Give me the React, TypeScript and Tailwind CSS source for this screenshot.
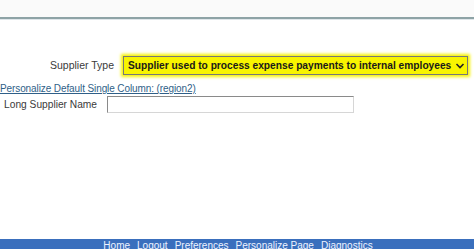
import React from 'react';

const footerLinks = ['Home', 'Logout', 'Preferences', 'Personalize Page', 'Diagnostics'];

const App: React.FC = () => {
  return (
    <div className="w-[474px] h-[249px] bg-white overflow-hidden flex flex-col font-['Liberation_Sans',Arial,sans-serif] text-[#3a3a3a]">
      {/* top rule */}
      <div className="h-[17px] bg-[#fafafa]" />
      <div className="h-[2px] bg-[#8ea3a6]" />
      <div className="h-px bg-[#dfe6ea]" />

      {/* supplier type */}
      <div className="mt-[36px] flex items-center h-[19px]">
        <span className="w-[114px] shrink-0 text-right text-[10.5px] whitespace-nowrap">Supplier Type</span>
        <div className="ml-[9px] w-[345px] shrink-0 h-[19px] bg-[#f8f400] border border-[#777] flex items-center justify-between pl-[4px] pr-[2px] shadow-[0_0_3px_2px_#f5f200]">
          <span className="text-[10.2px] font-bold text-[#1a1a1a] whitespace-nowrap">
            Supplier used to process expense payments to internal employees
          </span>
          <svg width="10" height="8" viewBox="0 0 10 8" className="shrink-0">
            <path d="M1.5 2 L5 5.5 L8.5 2" stroke="#222" strokeWidth="1.6" fill="none" />
          </svg>
        </div>
      </div>

      {/* personalize link */}
      <a href="#" className="mt-[7px] text-[10px] tracking-[-0.1px] text-[#2f5f88] underline whitespace-nowrap leading-[13px] w-fit">
        Personalize Default Single Column: (region2)
      </a>

      {/* long supplier name */}
      <div className="mt-[1px] flex items-center h-[17px]">
        <span className="w-[97px] shrink-0 text-right text-[10.2px] whitespace-nowrap">Long Supplier Name</span>
        <input
          type="text"
          className="ml-[10px] w-[247px] h-[17px] shrink-0 border border-[#8a8a8a] border-r-[#d6d6d6] border-b-[#d6d6d6] bg-white outline-none"
        />
      </div>

      <div className="flex-1" />

      {/* footer */}
      <div className="h-[10px] bg-[#3a6fbd] flex justify-center items-start gap-[7px] pl-[2px] overflow-hidden">
        {footerLinks.map((l) => (
          <a key={l} href="#" className="text-[10px] leading-[13px] text-[#eef3ff] underline">
            {l}
          </a>
        ))}
      </div>
    </div>
  );
};

export default App;
